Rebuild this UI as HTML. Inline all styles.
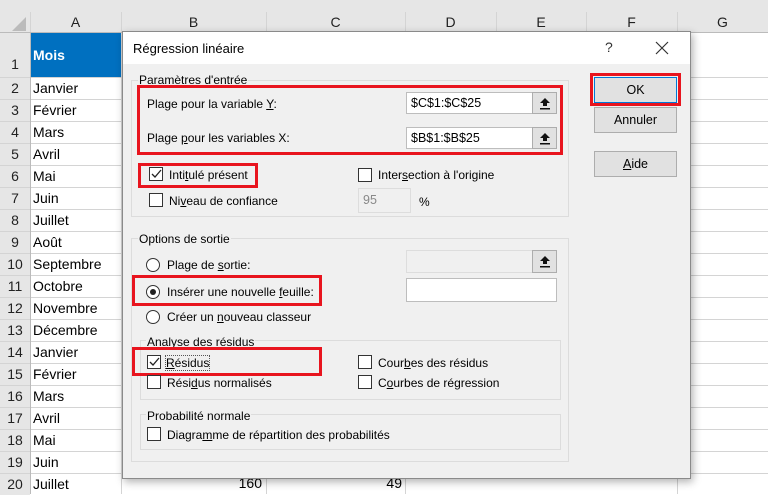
<!DOCTYPE html>
<html><head><meta charset="utf-8"><style>
*{margin:0;padding:0;box-sizing:border-box}
body{width:768px;height:494px;overflow:hidden;background:#fff;font-family:"Liberation Sans",sans-serif;position:relative}
.a{position:absolute}
.hl{position:absolute;background:#d4d4d4}
.rn{position:absolute;left:0;width:30px;text-align:center;font-size:14px;color:#222;background:#e6e6e6}
.ct{position:absolute;left:33px;font-size:14px;color:#000}
.ch{position:absolute;top:12px;height:21px;text-align:center;font-size:14px;line-height:21px;color:#222;background:#e6e6e6}
.d{font-size:12px;color:#000;position:absolute;white-space:nowrap}
.grp{position:absolute;border:1px solid #dcdcdc}
.lab{position:absolute;font-size:12px;background:#f0f0f0;padding:0 1px;white-space:nowrap}
.cb{position:absolute;width:14px;height:14px;border:1px solid #333;background:#fff}
.rd{position:absolute;width:14px;height:14px;border:1px solid #333;border-radius:50%;background:#fff}
.inp{position:absolute;background:#fff;border:1px solid #bdbdbd;font-size:12.5px;padding-left:4px;line-height:20px}
.ub{position:absolute;background:#e1e1e1;border:1px solid #adadad}
.ub svg{position:absolute;left:5px;top:4px}
.btn{position:absolute;left:594px;width:83px;height:26px;background:#e1e1e1;border:1px solid #adadad;text-align:center;font-size:12.5px;line-height:24px}
.red{position:absolute;border:3px solid #e8141e}
</style></head><body>
<div class="a" style="left:0;top:0;width:768px;height:12px;background:#e6e6e6"></div>
<div class="a" style="left:0;top:12px;width:30px;height:21px;background:#e6e6e6"></div>
<div class="a" style="left:12px;top:17px;width:0;height:0;border-left:14px solid transparent;border-bottom:14px solid #bbb"></div>
<div class="ch" style="left:30px;width:91px">A</div>
<div class="ch" style="left:121px;width:145px">B</div>
<div class="ch" style="left:266px;width:139px">C</div>
<div class="ch" style="left:405px;width:91px">D</div>
<div class="ch" style="left:496px;width:90px">E</div>
<div class="ch" style="left:586px;width:91px">F</div>
<div class="ch" style="left:677px;width:91px">G</div>
<div class="hl" style="left:30px;top:12px;width:1px;height:21px"></div>
<div class="hl" style="left:121px;top:12px;width:1px;height:21px"></div>
<div class="hl" style="left:266px;top:12px;width:1px;height:21px"></div>
<div class="hl" style="left:405px;top:12px;width:1px;height:21px"></div>
<div class="hl" style="left:496px;top:12px;width:1px;height:21px"></div>
<div class="hl" style="left:586px;top:12px;width:1px;height:21px"></div>
<div class="hl" style="left:677px;top:12px;width:1px;height:21px"></div>
<div class="a" style="left:0;top:32px;width:768px;height:1px;background:#bbb"></div>
<div class="rn" style="top:33px;height:44px;line-height:62px">1</div>
<div class="a" style="left:30px;top:33px;width:91px;height:44px;background:#0070c0;color:#fff;font-weight:bold;font-size:14px;padding:14px 0 0 3px">Mois</div>
<div id="rows"></div>
<div class="a" style="left:30px;top:33px;width:1px;height:461px;background:#bbb"></div>
<div class="a" style="left:121px;top:33px;width:1px;height:461px;background:#d4d4d4"></div>
<div class="a" style="left:266px;top:33px;width:1px;height:461px;background:#d4d4d4"></div>
<div class="a" style="left:405px;top:33px;width:1px;height:461px;background:#d4d4d4"></div>
<div class="a" style="left:677px;top:33px;width:1px;height:461px;background:#d4d4d4"></div>
<div class="a" style="left:200px;top:475px;width:62px;text-align:right;font-size:14px">160</div>
<div class="a" style="left:340px;top:475px;width:62px;text-align:right;font-size:14px">49</div>

<div class="a" style="left:122px;top:31px;width:569px;height:448px;background:#f0f0f0;border:1px solid #8a8a8a;box-shadow:2px 3px 8px rgba(0,0,0,.3)"></div>
<div class="a" style="left:123px;top:32px;width:567px;height:32px;background:#fff"></div>
<div class="d" style="left:133px;top:41px;font-size:13px">Régression linéaire</div>
<div class="d" style="left:605px;top:39px;font-size:14px;color:#333">?</div>
<svg class="a" style="left:655px;top:41px" width="14" height="14"><path d="M1 1 L13 13 M13 1 L1 13" stroke="#333" stroke-width="1.2"/></svg>

<div class="grp" style="left:131px;top:80px;width:438px;height:137px"></div>
<div class="lab" style="left:138px;top:73px">Paramètres d'entrée</div>
<div class="d" style="left:147px;top:97px">Plage pour la variable <u>Y</u>:</div>
<div class="d" style="left:147px;top:131px">Plage <u>p</u>our les variables X:</div>
<div class="inp" style="left:406px;top:92px;width:127px;height:22px">$C$1:$C$25</div>
<div class="ub" style="left:532px;top:92px;width:25px;height:22px"><svg width="14" height="13"><path d="M7 1 L12 6 L9 6 L9 9 L5 9 L5 6 L2 6 Z" fill="#111"/><rect x="2" y="11" width="10" height="1.5" fill="#111"/></svg></div>
<div class="inp" style="left:406px;top:127px;width:127px;height:22px">$B$1:$B$25</div>
<div class="ub" style="left:532px;top:127px;width:25px;height:22px"><svg width="14" height="13"><path d="M7 1 L12 6 L9 6 L9 9 L5 9 L5 6 L2 6 Z" fill="#111"/><rect x="2" y="11" width="10" height="1.5" fill="#111"/></svg></div>
<div class="red" style="left:137px;top:85px;width:426px;height:70px"></div>

<div class="cb" style="left:149px;top:167px"><svg width="12" height="12" style="position:absolute;left:0;top:0"><path d="M2 6 L5 9 L11 2" stroke="#222" stroke-width="1.3" fill="none"/></svg></div>
<div class="d" style="left:169px;top:168px">Inti<u>t</u>ulé présent</div>
<div class="red" style="left:138px;top:163px;width:120px;height:25px"></div>
<div class="cb" style="left:149px;top:193px"></div>
<div class="d" style="left:169px;top:194px">Ni<u>v</u>eau de confiance</div>
<div class="cb" style="left:358px;top:168px"></div>
<div class="d" style="left:378px;top:168px">Inter<u>s</u>ection à l'origine</div>
<div class="inp" style="left:358px;top:188px;width:53px;height:25px;background:#f0f0f0;border-color:#ddd;color:#888;line-height:23px">95</div>
<div class="d" style="left:419px;top:195px">%</div>

<div class="btn" style="top:77px;border-color:#0078d7">OK</div>
<div class="red" style="left:590px;top:73px;width:91px;height:33px"></div>
<div class="btn" style="top:107px">Annuler</div>
<div class="btn" style="top:151px"><u>A</u>ide</div>

<div class="grp" style="left:131px;top:238px;width:438px;height:224px"></div>
<div class="lab" style="left:138px;top:232px">Options de sortie</div>
<div class="rd" style="left:146px;top:258px"></div>
<div class="d" style="left:167px;top:258px">Plage de <u>s</u>ortie:</div>
<div class="inp" style="left:406px;top:250px;width:127px;height:23px;background:#f0f0f0;border-color:#ddd"></div>
<div class="ub" style="left:532px;top:250px;width:25px;height:23px"><svg width="14" height="13"><path d="M7 1 L12 6 L9 6 L9 9 L5 9 L5 6 L2 6 Z" fill="#111"/><rect x="2" y="11" width="10" height="1.5" fill="#111"/></svg></div>
<div class="inp" style="left:406px;top:278px;width:151px;height:24px"></div>
<div class="rd" style="left:146px;top:285px"><div class="a" style="left:3px;top:3px;width:6px;height:6px;border-radius:50%;background:#222"></div></div>
<div class="d" style="left:167px;top:285px">Insérer une nouvelle <u>f</u>euille:</div>
<div class="red" style="left:132px;top:275px;width:190px;height:31px"></div>
<div class="rd" style="left:146px;top:310px"></div>
<div class="d" style="left:167px;top:310px">Créer un <u>n</u>ouveau classeur</div>

<div class="grp" style="left:140px;top:340px;width:421px;height:60px"></div>
<div class="lab" style="left:146px;top:335px">Analyse des résidus</div>
<div class="cb" style="left:147px;top:355px"><svg width="12" height="12" style="position:absolute;left:0;top:0"><path d="M2 6 L5 9 L11 2" stroke="#222" stroke-width="1.3" fill="none"/></svg></div>
<div class="d" style="left:166px;top:356px;outline:1px dotted #555"><u>R</u>ésidus</div>
<div class="red" style="left:132px;top:347px;width:190px;height:29px"></div>
<div class="cb" style="left:147px;top:375px"></div>
<div class="d" style="left:167px;top:376px">Rési<u>d</u>us normalisés</div>
<div class="cb" style="left:358px;top:355px"></div>
<div class="d" style="left:378px;top:356px">Cour<u>b</u>es des résidus</div>
<div class="cb" style="left:358px;top:375px"></div>
<div class="d" style="left:378px;top:376px">C<u>o</u>urbes de régression</div>

<div class="grp" style="left:140px;top:414px;width:421px;height:36px"></div>
<div class="lab" style="left:146px;top:409px">Probabilité normale</div>
<div class="cb" style="left:147px;top:427px"></div>
<div class="d" style="left:167px;top:428px">Diagra<u>m</u>me de répartition des probabilités</div>

<script>
var n=["Janvier","Février","Mars","Avril","Mai","Juin","Juillet","Août","Septembre","Octobre","Novembre","Décembre","Janvier","Février","Mars","Avril","Mai","Juin","Juillet"],h="";
for(var i=0;i<19;i++){var t=77+i*22;h+='<div class="rn" style="top:'+t+'px;height:22px;line-height:22px">'+(i+2)+'</div><div class="ct" style="top:'+(t+3)+'px">'+n[i]+'</div><div class="hl" style="left:0;top:'+t+'px;width:768px;height:1px"></div>';}
document.getElementById("rows").outerHTML=h;
</script>
</body></html>
